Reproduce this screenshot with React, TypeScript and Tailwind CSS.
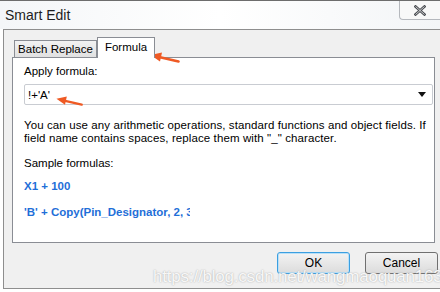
import React from "react"

const font = { fontFamily: '"Liberation Sans", Arial, sans-serif' }

function Arrow({ className }: { className: string }) {
  return (
    <svg className={className} viewBox="0 0 30 12" fill="none">
      <path d="M28.5 9.5 L9 5" stroke="#ef5a24" strokeWidth="2.6" strokeLinecap="round" />
      <path d="M0.5 3 L12 0.5 L10 9.5 Z" fill="#ef5a24" />
    </svg>
  )
}

export default function App() {
  return (
    <div className="relative w-[440px] h-[292px] overflow-hidden bg-white text-[#000]" style={font}>
      {/* Title bar */}
      <div className="h-[29px] flex items-start justify-between border-t border-[#6d6d6d] bg-gradient-to-r from-[#f4f6f8] via-white to-[#f3f5f7]">
        <div className="pl-[5px] pt-[6px] text-[14px] leading-[16px] text-[#1e1e1e]">Smart Edit</div>
        <div className="w-[41px] h-[19px] border-l border-b border-[#b5b8bd] rounded-bl-[4px] bg-[#f8f8f8] flex items-center justify-center">
          <svg width="12" height="11" viewBox="0 0 12 11">
            <path d="M1.5 1.5 L10.5 9.5 M10.5 1.5 L1.5 9.5" stroke="#4a4d52" strokeWidth="2.6" strokeLinecap="square" />
            <path d="M1.5 1.5 L10.5 9.5 M10.5 1.5 L1.5 9.5" stroke="#e8e8e8" strokeWidth="0.8" />
          </svg>
        </div>
      </div>

      {/* Dialog body */}
      <div className="ml-[3px] h-[260px] border-l border-t border-b border-[#8e8e8e] bg-[#f0f0f0] pl-[8px] pt-[7px]">
        {/* Tabs */}
        <div className="flex items-end h-[20px] pl-[2px]">
          <div className="w-[83px] h-[17px] border border-b-0 border-[#8a8d94] bg-gradient-to-b from-[#f2f2f2] to-[#e1e1e1] text-[11.5px] leading-[16px] text-center">
            Batch Replace
          </div>
          <div className="relative z-10 w-[58px] h-[21px] -mb-px border border-b-0 border-[#8a8d94] bg-white text-[11.5px] leading-[19px] text-center">
            Formula
          </div>
        </div>

        {/* Tab panel */}
        <div className="w-[423px] h-[186px] border border-[#8a8d94] bg-white pl-[11px] pt-[6px] text-[11.5px]">
          <div className="leading-[14px]">Apply formula:</div>
          <div className="mt-[6px] w-[409px] h-[21px] border border-[#c9ccd2] rounded-[2px] flex items-center justify-between pl-[3px] pr-[6px]">
            <span className="leading-[14px]">!+'A'</span>
            <svg width="8" height="5" viewBox="0 0 8 5">
              <path d="M0 0 H8 L4 5 Z" fill="#111" />
            </svg>
          </div>
          <p className="mt-[14px] leading-[13px] w-[412px] tracking-[0.1px]">
            You can use any arithmetic operations, standard functions and object fields. If field name contains spaces, replace them with "_" character.
          </p>
          <div className="mt-[11px] leading-[14px]">Sample formulas:</div>
          <div className="mt-[9px] leading-[14px] font-bold text-[#1f6fd8]">X1 + 100</div>
          <div className="mt-[12px] leading-[14px] font-bold text-[#1f6fd8] w-[166px] overflow-hidden whitespace-nowrap">
            'B' + Copy(Pin_Designator, 2, 3)
          </div>
        </div>

        {/* Buttons */}
        <div className="flex justify-end gap-[15px] mt-[9px] pr-[2px]">
          <button className="w-[73px] h-[22px] rounded-[3px] border border-[#3c9fe0] bg-gradient-to-b from-[#f3f3f3] to-[#dcdcdc] text-[12px] shadow-[inset_0_0_0_1px_#b9e0f8]">
            OK
          </button>
          <button className="w-[73px] h-[22px] rounded-[3px] border border-[#707070] bg-gradient-to-b from-[#f3f3f3] to-[#dcdcdc] text-[12px]">
            Cancel
          </button>
        </div>
      </div>

      {/* Watermark */}
      <div className="absolute left-[153px] top-[267px] text-[17px] leading-[20px] text-white/90 [text-shadow:0_0_1.5px_#9a9a9a] tracking-[-0.2px]">
        https://blog.csdn.net/wangmaoquan163
      </div>

      {/* Annotation arrows */}
      <Arrow className="absolute left-[150px] top-[52px] w-[30px] h-[12px]" />
      <Arrow className="absolute left-[56px] top-[95px] w-[27px] h-[13px]" />
    </div>
  )
}
